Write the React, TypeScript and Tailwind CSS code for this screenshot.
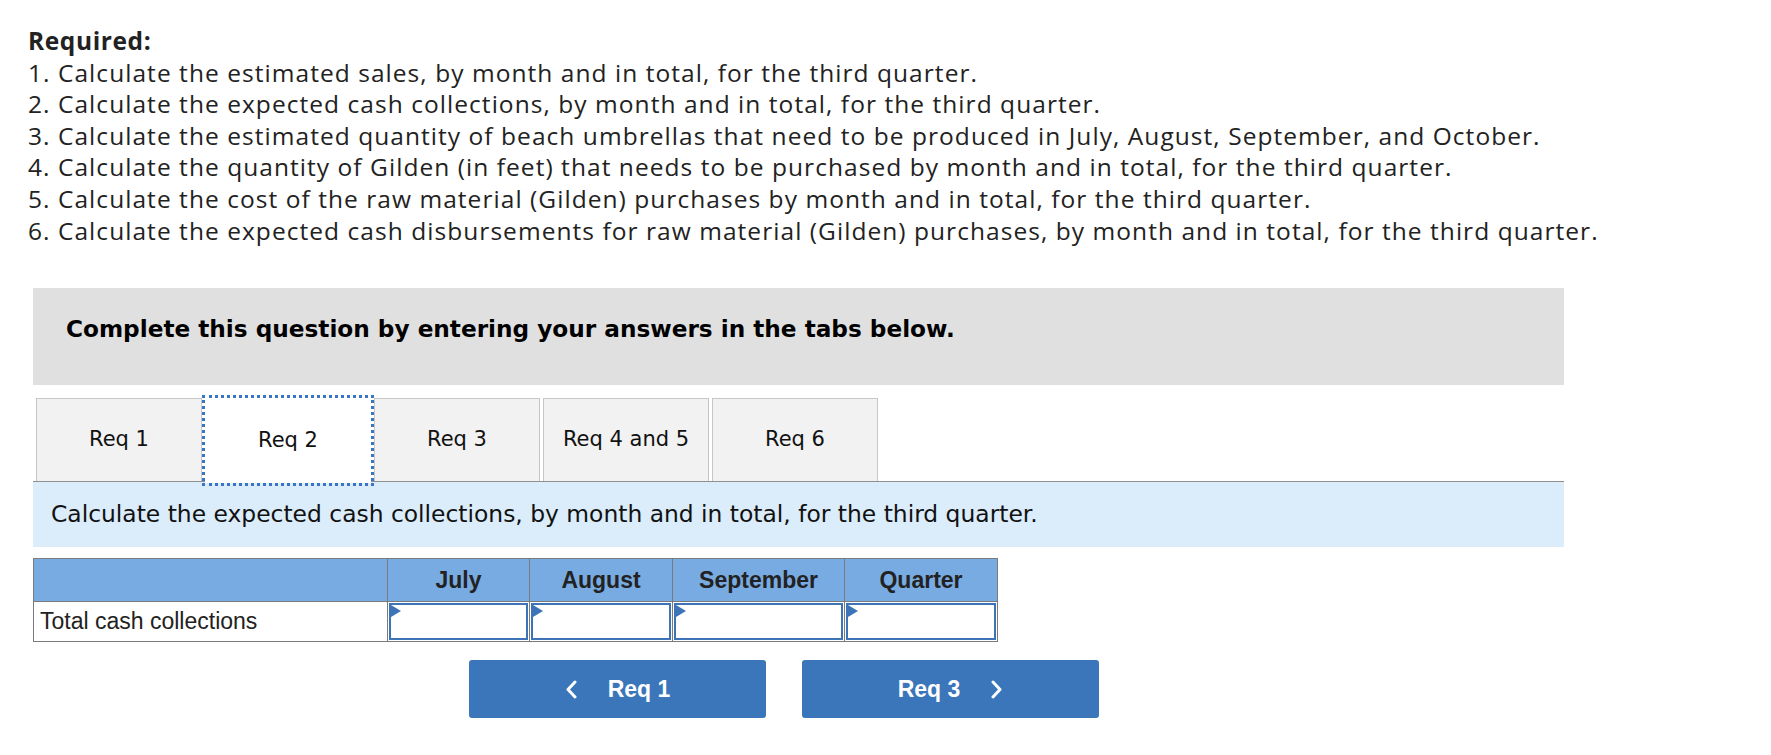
const steps = [
  "1. Calculate the estimated sales, by month and in total, for the third quarter.",
  "2. Calculate the expected cash collections, by month and in total, for the third quarter.",
  "3. Calculate the estimated quantity of beach umbrellas that need to be produced in July, August, September, and October.",
  "4. Calculate the quantity of Gilden (in feet) that needs to be purchased by month and in total, for the third quarter.",
  "5. Calculate the cost of the raw material (Gilden) purchases by month and in total, for the third quarter.",
  "6. Calculate the expected cash disbursements for raw material (Gilden) purchases, by month and in total, for the third quarter.",
];

const tabs = ["Req 1", "Req 2", "Req 3", "Req 4 and 5", "Req 6"];

const months = [
  { label: "July", w: "w-[142px]" },
  { label: "August", w: "w-[143px]" },
  { label: "September", w: "w-[172px]" },
  { label: "Quarter", w: "w-[153px]" },
];

function InputCell() {
  return (
    <div className="relative h-[37px] border-2 border-[#3d74b8] bg-white">
      <svg className="absolute left-0 top-0" width="10" height="12" viewBox="0 0 10 12">
        <polygon points="0,0 10,6 0,12" fill="#3d74b8" />
      </svg>
    </div>
  );
}

function Chevron({ dir }: { dir: "left" | "right" }) {
  return (
    <svg width="12" height="19" viewBox="0 0 12 19" fill="none">
      <polyline
        points={dir === "left" ? "10,2 3,9.5 10,17" : "2,2 9,9.5 2,17"}
        stroke="white"
        strokeWidth="3"
        strokeLinecap="round"
        strokeLinejoin="round"
      />
    </svg>
  );
}

export default function App() {
  return (
    <div className="min-h-screen bg-white pb-10">
      <div className="pt-[25px] pl-[28px] text-[24.5px] leading-[31.6px] tracking-[1.05px] text-[#222] font-['Open_Sans',sans-serif]">
        <p className="font-bold tracking-[0.6px]">Required:</p>
        {steps.map((s) => (
          <p key={s}>{s}</p>
        ))}
      </div>

      <div className="ml-[33px] mt-[42px] w-[1531px] font-['DejaVu_Sans',Verdana,sans-serif]">
        <div className="h-[97px] bg-[#e0e0e0] pt-[27px] pl-[33px] text-[23.2px] leading-[28px] font-bold text-black">
          Complete this question by entering your answers in the tabs below.
        </div>

        <div className="mt-[13px] flex h-[84px] border-b border-[#8f8f8f]">
          {tabs.map((t, i) =>
            i === 1 ? (
              <div
                key={t}
                className="relative z-10 ml-[3px] flex h-[85px] w-[166px] items-center justify-center bg-white text-[21px] text-[#111] outline-[3px] outline-dotted outline-[#3a75c4]"
              >
                {t}
              </div>
            ) : (
              <div
                key={t}
                className="ml-[3px] flex h-[83px] w-[166px] items-center justify-center border border-b-0 border-[#c6c6c6] bg-[#f2f2f2] text-[21px] text-[#111]"
              >
                {t}
              </div>
            )
          )}
        </div>

        <div className="flex h-[65px] items-center bg-[#dbecfa] pl-[18px] text-[23.4px] text-[#111]">
          Calculate the expected cash collections, by month and in total, for the third quarter.
        </div>

        <table className="mt-[11px] w-[964px] table-fixed border-collapse font-['Liberation_Sans',Arial,sans-serif] text-[23px]">
          <thead>
            <tr className="h-[43px] bg-[#78abe2]">
              <th className="w-[354px] border border-[#7a7a7a]"></th>
              {months.map((m) => (
                <th key={m.label} className={`${m.w} border border-[#7a7a7a] text-center font-bold text-[#222]`}>
                  {m.label}
                </th>
              ))}
            </tr>
          </thead>
          <tbody>
            <tr className="h-[40px]">
              <td className="border border-[#7a7a7a] pl-[6px] text-left text-[#222]">Total cash collections</td>
              {months.map((m) => (
                <td key={m.label} className="border border-[#7a7a7a] p-[1px]">
                  <InputCell />
                </td>
              ))}
            </tr>
          </tbody>
        </table>

        <div className="mt-[18px] ml-[436px] flex gap-[36px] font-['Liberation_Sans',Arial,sans-serif] text-[23px] font-bold text-white">
          <button className="flex h-[58px] w-[297px] items-center justify-center gap-[31px] rounded-[3px] bg-[#3a76b9]">
            <Chevron dir="left" />
            <span>Req 1</span>
          </button>
          <button className="flex h-[58px] w-[297px] items-center justify-center gap-[31px] rounded-[3px] bg-[#3a76b9]">
            <span>Req 3</span>
            <Chevron dir="right" />
          </button>
        </div>
      </div>
    </div>
  );
}
